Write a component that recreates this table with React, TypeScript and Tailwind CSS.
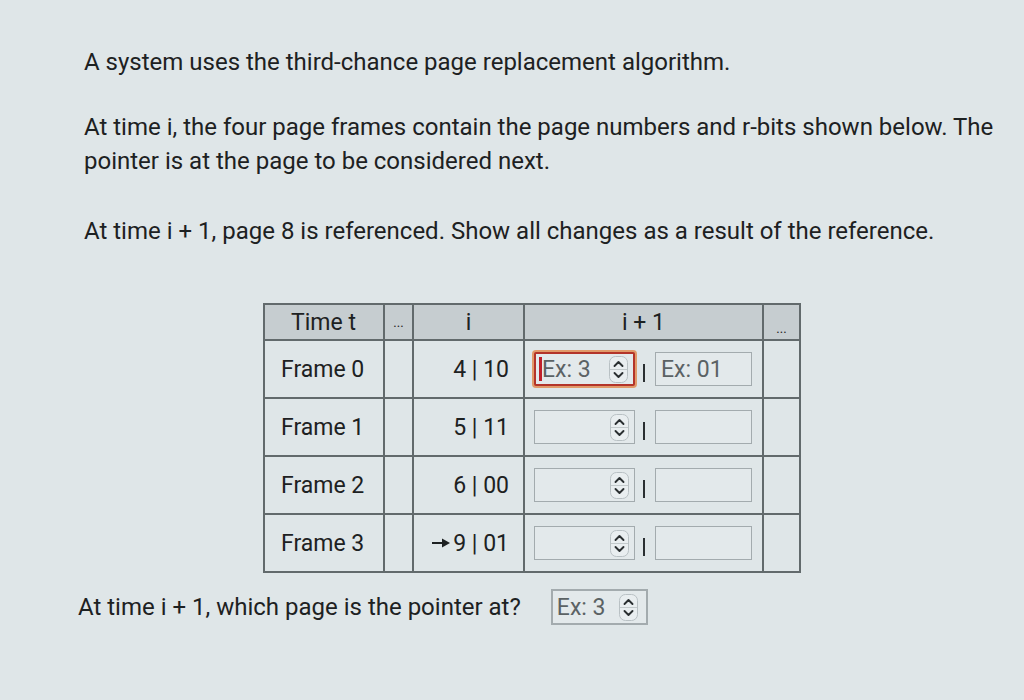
import React from 'react';

function Spinner() {
  return (
    <svg width="19" height="27" viewBox="0 0 19 27" className="shrink-0">
      <rect x="0.5" y="0.5" width="18" height="26" rx="6" fill="#e9eef0" stroke="#b9c1c4" />
      <line x1="1" y1="13.5" x2="18" y2="13.5" stroke="#c3cacc" />
      <path d="M5.5 10 L9.5 6 L13.5 10" fill="none" stroke="#2a2f31" strokeWidth="1.9" strokeLinecap="round" strokeLinejoin="round" />
      <path d="M5.5 17 L9.5 21 L13.5 17" fill="none" stroke="#2a2f31" strokeWidth="1.9" strokeLinecap="round" strokeLinejoin="round" />
    </svg>
  );
}

function PageSelect({ placeholder, focused }: { placeholder?: string; focused?: boolean }) {
  return (
    <div
      className={`flex items-center h-[34px] w-[101px] bg-[#e3e9eb] pl-[3px] pr-[5px] ${
        focused
          ? 'border-2 border-[#b3342a] shadow-[0_0_0_2px_rgba(226,128,64,0.75)] rounded-[2px]'
          : 'border border-[#a3abae]'
      }`}>
      {focused && <span className="w-[3px] h-[24px] bg-[#c0202a]" />}
      <span className="flex-1 text-[#5b6264] text-[23px] leading-none">{placeholder ?? ''}</span>
      <Spinner />
    </div>
  );
}

function BitsInput({ placeholder }: { placeholder?: string }) {
  return (
    <div className="flex items-center h-[34px] w-[97px] bg-[#e3e9eb] border border-[#a3abae] pl-[5px] text-[23px] leading-none text-[#5b6264]">
      {placeholder ?? ''}
    </div>
  );
}

const frames = [
  { name: 'Frame 0', page: '4 | 10', first: true },
  { name: 'Frame 1', page: '5 | 11' },
  { name: 'Frame 2', page: '6 | 00' },
  { name: 'Frame 3', page: '9 | 01', pointer: true },
];

export default function App() {
  return (
    <div className="w-[1024px] h-[700px] bg-[#dfe6e8] text-[#1d2122] font-['Roboto','Liberation_Sans',sans-serif] overflow-hidden">
      <div className="pl-[84px] pt-[45px] text-[24px] leading-[34px]">
        <p>A system uses the third-chance page replacement algorithm.</p>
        <p className="mt-[31px]">
          At time i, the four page frames contain the page numbers and r-bits shown below. The
          <br />
          pointer is at the page to be considered next.
        </p>
        <p className="mt-[36px]">At time i + 1, page 8 is referenced. Show all changes as a result of the reference.</p>

        <table className="table-fixed w-[536px] ml-[179px] mt-[55px] border-collapse border-2 border-[#626a6c] text-[23px] leading-none">
          <thead>
            <tr className="h-[36px] bg-[#c6cdd0]">
              <th className="w-[120px] border-2 border-[#626a6c] text-left font-normal pl-[26px]">Time t</th>
              <th className="w-[29px] border-2 border-[#626a6c] font-normal text-[13px]">...</th>
              <th className="w-[111px] border-2 border-[#626a6c] font-normal">i</th>
              <th className="w-[239px] border-2 border-[#626a6c] font-normal">i + 1</th>
              <th className="w-[37px] border-2 border-[#626a6c] font-normal text-[13px] align-bottom pb-[4px]">...</th>
            </tr>
          </thead>
          <tbody>
            {frames.map((f) => (
              <tr key={f.name} className="h-[58px]">
                <td className="border-2 border-[#626a6c] pl-[16px]">{f.name}</td>
                <td className="border-2 border-[#626a6c]" />
                <td className="border-2 border-[#626a6c] text-right pr-[14px]">
                  {f.pointer && (
                    <svg width="20" height="12" viewBox="0 0 20 12" className="inline-block mr-[2px] mb-[3px]">
                      <line x1="1" y1="6" x2="13" y2="6" stroke="#1d2122" strokeWidth="2" />
                      <path d="M11 1.5 L19 6 L11 10.5 Z" fill="#1d2122" />
                    </svg>
                  )}
                  {f.page}
                </td>
                <td className="border-2 border-[#626a6c] pl-[9px]">
                  <div className="flex items-center">
                    <PageSelect placeholder={f.first ? 'Ex: 3' : undefined} focused={f.first} />
                    <span className="w-[2px] h-[18px] bg-[#2a2f31] ml-[8px] mr-[10px] mt-[8px]" />
                    <BitsInput placeholder={f.first ? 'Ex: 01' : undefined} />
                  </div>
                </td>
                <td className="border-2 border-[#626a6c]" />
              </tr>
            ))}
          </tbody>
        </table>

        <div className="flex items-center mt-[16px] -ml-[6px]">
          <span className="text-[24px]">At time i + 1, which page is the pointer at?</span>
          <div className="ml-[30px] flex items-center h-[36px] w-[97px] border-2 border-[#a3abae] bg-[#e3e9eb] pl-[4px] pr-[8px]">
            <span className="flex-1 text-[23px] leading-none text-[#5b6264]">Ex: 3</span>
            <Spinner />
          </div>
        </div>
      </div>
    </div>
  );
}
